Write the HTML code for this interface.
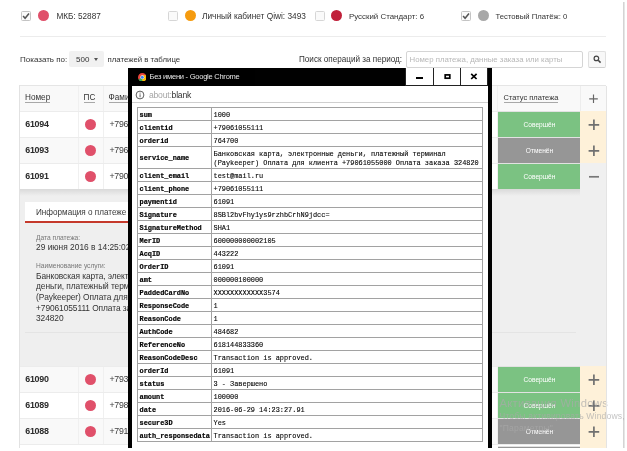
<!DOCTYPE html>
<html><head><meta charset="utf-8">
<style>
*{box-sizing:border-box;margin:0;padding:0}
html,body{width:627px;height:451px;overflow:hidden;background:#fff}
body{font-family:"Liberation Sans",sans-serif;color:#333;position:relative;font-size:9px}
#root{position:absolute;left:0;top:0;width:627px;height:451px;overflow:hidden;will-change:transform;opacity:0.999;background:#fff}
.abs{position:absolute}
.cb{position:absolute;width:10px;height:10px;border:1px solid #c4c4c4;background:#fafafa;border-radius:1.5px;top:10.5px}
.cb svg{position:absolute;left:-1px;top:-1px}
.dot{position:absolute;width:11.2px;height:11.2px;border-radius:50%;top:9.9px}
.lbl{position:absolute;top:10.5px;font-size:8.2px;color:#333;white-space:nowrap;line-height:11px}
.hr{position:absolute;left:20px;top:36px;width:586px;height:1px;background:#ececec}
.t{position:absolute;white-space:nowrap}
.f8{font-size:8px;line-height:11px;color:#333}
/* table */
#tbl{position:absolute;left:19px;top:85px;width:587px;height:366px;background:#efefef;border-left:1px solid #e2e2e2}
.row{position:absolute;left:0;width:586px;height:26px;background:#fff;border-top:1px solid #ececec}
.row.alt{background:#f9f9f9}
.c{position:absolute;top:0;height:100%;border-left:1px solid #f0f0f0}
.num{position:absolute;left:5.3px;top:7.3px;letter-spacing:-0.28px;font-size:8.9px;font-weight:bold;color:#2a2a2a;line-height:10px}
.ps{position:absolute;left:64.5px;top:6.5px;width:11px;height:11px;border-radius:50%;background:#e0506a}
.ph{position:absolute;left:89.5px;top:7.2px;font-size:8.8px;letter-spacing:-0.32px;color:#404040;line-height:10px}
.st{position:absolute;left:477.7px;top:0;width:83.6px;box-shadow:0 -1px 0 #e2e2e2;height:25px;color:#fff;font-size:6.6px;text-align:center;line-height:25px}
.g{background:#7bc282}
.gr{background:#969696}
.pl{position:absolute;left:560px;top:-1px;width:26px;height:27px;background:#fef1d9}
.pl i,.pl b{position:absolute;background:#6a6a6a}
.pl i{left:7.5px;top:12.3px;width:11px;height:1.8px}
.pl b{left:12.1px;top:7.7px;width:1.8px;height:11px}
.hd{font-size:8.2px;line-height:8px;color:#333;border-bottom:1px solid #a8a8a8;top:8px}
/* popup */
#pop{position:absolute;left:128px;top:68px;width:364px;height:400px;background:#fff;border-left:4px solid #000;border-right:4px solid #000}
#tb{position:absolute;left:0;top:0;width:356px;height:18px;background:#000}
#tb .ttl{position:absolute;left:17.6px;top:4px;letter-spacing:-0.24px;font-size:7.5px;color:#e6e6e6;line-height:10px;white-space:nowrap}
.wb{position:absolute;top:0;height:18px;background:#fff;border:1px solid #222;border-top:0}
#ab{position:absolute;left:0;top:18px;width:356px;height:17px;border-bottom:1px solid #cfcfcf;background:#fff}
#kv{position:absolute;left:5px;top:39px;border-collapse:collapse;font-family:"Liberation Mono",monospace;font-size:6.92px;color:#000}
#kv td{border:1px solid #a2a2a2;height:13px;padding:2px 0 0 1.5px;white-space:nowrap;line-height:9px;vertical-align:middle}
#kv td.k{font-weight:bold;-webkit-text-stroke:0.2px #111;width:74px;min-width:74px;max-width:74px}
#kv td.v{width:271px;min-width:271px;padding-left:1.5px;-webkit-text-stroke:0.1px #000}
.wm{position:absolute;white-space:nowrap;color:rgba(170,170,170,0.7)}
</style></head><body><div id="root">

<!-- top filter row -->
<div class="cb on" style="left:21px"><svg width="10" height="10" viewBox="0 0 10 10"><path d="M2.1 5L4.1 7.3L8 2.5" fill="none" stroke="#555" stroke-width="1.5"/></svg></div><div class="dot" style="left:38.2px;background:#e0506a"></div><div class="lbl" style="left:56.5px">МКБ: 52887</div>
<div class="cb" style="left:167.6px;border-color:#d6d6d6"></div><div class="dot" style="left:184.8px;background:#f59b0f"></div><div class="lbl" style="left:202px;font-size:8.3px">Личный кабинет Qiwi: 3493</div>
<div class="cb" style="left:314.8px;border-color:#d6d6d6"></div><div class="dot" style="left:331.2px;background:#c0203a"></div><div class="lbl" style="left:349px;font-size:7.9px">Русский Стандарт: 6</div>
<div class="cb on" style="left:461px"><svg width="10" height="10" viewBox="0 0 10 10"><path d="M2.1 5L4.1 7.3L8 2.5" fill="none" stroke="#555" stroke-width="1.5"/></svg></div><div class="dot" style="left:478.2px;background:#a8a8a8"></div><div class="lbl" style="left:495.5px;font-size:7.7px">Тестовый Платёж: 0</div>
<div class="hr"></div>
<div class="abs" style="left:606px;top:86px;width:1px;height:362px;background:#e4e4e4;z-index:1"></div>
<div class="abs" style="left:623px;top:2px;width:1px;height:449px;background:#d4d4d4"></div><div class="abs" style="left:624px;top:2px;width:1px;height:449px;background:#e6e6e6"></div>

<!-- controls -->
<div class="t f8" style="left:20px;top:53.5px">Показать по:</div>
<div class="abs" style="left:69px;top:51px;width:35px;height:16px;background:#f1f1f1;border-radius:2px"></div>
<div class="t f8" style="left:76px;top:53.5px">500</div>
<div class="abs" style="left:94px;top:58px;width:0;height:0;border:2.6px solid transparent;border-top:3px solid #555"></div>
<div class="t f8" style="left:107.5px;top:53.5px;font-size:7.8px">платежей в таблице</div>
<div class="t f8" style="left:299px;top:53.5px;font-size:8.15px">Поиск операций за период:</div>
<div class="abs" style="left:406px;top:51px;width:177px;height:17px;border:1px solid #d5d5d5;border-radius:2px;background:#fff"></div>
<div class="t f8" style="left:409.5px;top:54px;color:#b8b8b8;font-size:7.8px">Номер платежа, данные заказа или карты</div>
<div class="abs" style="left:588px;top:51px;width:18px;height:17px;border:1px solid #e0e0e0;border-bottom-color:#cfcfcf;border-radius:2px;background:#f8f8f8"></div>
<svg class="abs" style="left:593px;top:55px" width="9" height="9" viewBox="0 0 9 9"><circle cx="3.4" cy="3.4" r="2.3" fill="none" stroke="#444" stroke-width="1.2"/><path d="M5.2 5.2 L7.6 7.6" stroke="#444" stroke-width="1.5"/></svg>

<!-- main table -->
<div id="tbl">
  <div class="row alt" style="top:0;height:27px;border-top:1px solid #e5e5e5">
    <div class="c" style="left:58px;width:25px"></div><div class="c" style="left:83px;width:395px"></div><div class="c" style="left:477px;width:84px"></div>
    <div class="t hd" style="left:5px">Номер</div>
    <div class="t hd" style="left:63.5px">ПС</div>
    <div class="t hd" style="left:88.5px">Фамилия</div>
    <div class="t hd" style="left:483.5px;font-size:7.5px">Статус платежа</div>
    <div class="pl" style="background:#f9f9f9;border-left:1px solid #ededed;top:0"><svg class="abs" style="left:0;top:0" width="26" height="27" viewBox="0 0 26 27"><path d="M8.2 12.8H16.8M12.5 8.5V17.1" stroke="#666" stroke-width="1.15" fill="none"/></svg></div>
  </div>
  <div class="row" style="top:26px"><div class="c" style="left:58px;width:25px"></div><div class="c" style="left:83px;width:395px"></div><div class="c" style="left:477px;width:84px"></div><div class="num">61094</div><div class="ps"></div><div class="ph">+7961</div><div class="st g">Совершён</div><div class="pl"><svg class="abs" style="left:0;top:0" width="26" height="27" viewBox="0 0 26 27"><path d="M8.6 13.8H19.2M13.9 8.5V19.1" stroke="#707070" stroke-width="1.7" fill="none"/></svg></div></div>
  <div class="row alt" style="top:52px"><div class="c" style="left:58px;width:25px"></div><div class="c" style="left:83px;width:395px"></div><div class="c" style="left:477px;width:84px"></div><div class="num">61093</div><div class="ps"></div><div class="ph">+7961</div><div class="st gr">Отменён</div><div class="pl"><svg class="abs" style="left:0;top:0" width="26" height="27" viewBox="0 0 26 27"><path d="M8.6 13.8H19.2M13.9 8.5V19.1" stroke="#707070" stroke-width="1.7" fill="none"/></svg></div></div>
  <div class="row" style="top:78px"><div class="c" style="left:58px;width:25px"></div><div class="c" style="left:83px;width:395px"></div><div class="c" style="left:477px;width:84px"></div><div class="num">61091</div><div class="ps"></div><div class="ph">+7901</div><div class="st g">Совершён</div><div class="pl" style="background:#f0f0f0"><svg class="abs" style="left:0;top:0" width="26" height="27" viewBox="0 0 26 27"><path d="M9 13.8H19" stroke="#777" stroke-width="1.7" fill="none"/></svg></div></div>

  <!-- expanded info -->
  <div class="abs" style="left:0;top:104px;width:560px;height:7px;background:linear-gradient(rgba(0,0,0,0.09),rgba(0,0,0,0))"></div>
  <div class="abs" style="left:5px;top:116.5px;width:300px;height:19px;background:#fff"></div>
  <div class="abs" style="left:5px;top:135.5px;width:300px;height:2px;background:#c5392b"></div>
  <div class="abs" style="left:5px;top:247px;width:551px;height:1px;background:#e4e4e4"></div>
  <div class="t" style="left:16px;top:122px;font-size:8.15px;line-height:11px;color:#3a3a3a">Информация о платеже №</div>
  <div class="t" style="left:16px;top:148.8px;font-size:6.65px;line-height:8px;color:#777">Дата платежа:</div>
  <div class="t" style="left:16px;top:157px;font-size:8.4px;line-height:10px;color:#333">29 июня 2016 в 14:25:02</div>
  <div class="t" style="left:16px;top:176.5px;font-size:6.65px;line-height:8px;color:#777">Наименование услуги:</div>
  <div class="t" style="left:16px;top:185.6px;font-size:8.4px;line-height:10.7px;letter-spacing:-0.08px;color:#333">Банковская карта, электронные<br>деньги, платежный терминал<br>(Paykeeper) Оплата для клиента<br>+79061055111 Оплата заказа<br>324820</div>

  <div class="row alt" style="top:281px"><div class="c" style="left:58px;width:25px"></div><div class="c" style="left:83px;width:395px"></div><div class="c" style="left:477px;width:84px"></div><div class="num">61090</div><div class="ps"></div><div class="ph">+7931</div><div class="st g">Совершён</div><div class="pl"><svg class="abs" style="left:0;top:0" width="26" height="27" viewBox="0 0 26 27"><path d="M8.6 13.8H19.2M13.9 8.5V19.1" stroke="#707070" stroke-width="1.7" fill="none"/></svg></div></div>
  <div class="row" style="top:307px"><div class="c" style="left:58px;width:25px"></div><div class="c" style="left:83px;width:395px"></div><div class="c" style="left:477px;width:84px"></div><div class="num">61089</div><div class="ps"></div><div class="ph">+7981</div><div class="st g">Совершён</div><div class="pl"><svg class="abs" style="left:0;top:0" width="26" height="27" viewBox="0 0 26 27"><path d="M8.6 13.8H19.2M13.9 8.5V19.1" stroke="#707070" stroke-width="1.7" fill="none"/></svg></div></div>
  <div class="row alt" style="top:333px"><div class="c" style="left:58px;width:25px"></div><div class="c" style="left:83px;width:395px"></div><div class="c" style="left:477px;width:84px"></div><div class="num">61088</div><div class="ps"></div><div class="ph">+7911</div><div class="st gr">Отменён</div><div class="pl"><svg class="abs" style="left:0;top:0" width="26" height="27" viewBox="0 0 26 27"><path d="M8.6 13.8H19.2M13.9 8.5V19.1" stroke="#707070" stroke-width="1.7" fill="none"/></svg></div></div>
  <div class="row" style="top:359px"><div class="st gr" style="top:1.5px"></div><div class="pl"></div></div>
</div>

<!-- popup window -->
<div id="pop">
  <div id="tb">
    <svg class="abs" style="left:5.5px;top:4.6px" width="8.6" height="8.6" viewBox="0 0 10 10"><circle cx="5" cy="5" r="5" fill="#e8453c"/><path d="M5 5 L0.7 7.5 A5 5 0 0 0 5 10 L7.5 6.4Z" fill="#34a853"/><path d="M5 5 L5 10 A5 5 0 0 0 9.3 2.5 L5 2.5Z" fill="#fbbc05"/><circle cx="5" cy="5" r="2.3" fill="#fff"/><circle cx="5" cy="5" r="1.8" fill="#4285f4"/></svg>
    <div class="ttl">Без имени - Google Chrome</div>
    <div class="wb" style="left:273px;width:29px"><div class="abs" style="left:10px;top:9px;width:7px;height:2px;background:#000"></div></div>
    <div class="wb" style="left:301px;width:28px"><svg class="abs" style="left:8px;top:4px" width="12" height="10" viewBox="0 0 12 10"><rect x="3.2" y="2.9" width="4.6" height="3.3" fill="none" stroke="#000" stroke-width="1.7"/></svg></div>
    <div class="wb" style="left:328px;width:28px"><svg class="abs" style="left:9px;top:5px" width="8" height="7" viewBox="0 0 8 7"><path d="M1.2 0.8L6.6 6M6.6 0.8L1.2 6" stroke="#000" stroke-width="1.7" fill="none"/></svg></div>
  </div>
  <div id="ab">
    <svg class="abs" style="left:3.2px;top:3.5px" width="10" height="10" viewBox="0 0 10 10"><circle cx="5" cy="5" r="3.9" fill="none" stroke="#555" stroke-width="0.95"/><rect x="4.6" y="4.3" width="0.9" height="3" fill="#555"/><rect x="4.6" y="2.6" width="0.9" height="1" fill="#555"/></svg>
    <div class="t" style="left:17px;top:3.8px;font-size:8.6px;letter-spacing:-0.22px;line-height:10px;color:#a6a6a6">about:<span style="color:#333">blank</span></div>
  </div>
  <table id="kv">
    <tr><td class="k">sum</td><td class="v">1000</td></tr>
    <tr><td class="k">clientid</td><td class="v">+79061055111</td></tr>
    <tr><td class="k">orderid</td><td class="v">764700</td></tr>
    <tr><td class="k" style="height:22px">service_name</td><td class="v">Банковская карта, электронные деньги, платежный терминал<br>(Paykeeper) Оплата для клиента +79061055000 Оплата заказа 324820</td></tr>
    <tr><td class="k">client_email</td><td class="v">test@mail.ru</td></tr>
    <tr><td class="k">client_phone</td><td class="v">+79061055111</td></tr>
    <tr><td class="k">paymentid</td><td class="v">61091</td></tr>
    <tr><td class="k">Signature</td><td class="v">8SBl2bvFhy1ys9rzhbCrhN9jdcc=</td></tr>
    <tr><td class="k">SignatureMethod</td><td class="v">SHA1</td></tr>
    <tr><td class="k">MerID</td><td class="v">600000000002105</td></tr>
    <tr><td class="k">AcqID</td><td class="v">443222</td></tr>
    <tr><td class="k">OrderID</td><td class="v">61091</td></tr>
    <tr><td class="k">amt</td><td class="v">000000100000</td></tr>
    <tr><td class="k">PaddedCardNo</td><td class="v">XXXXXXXXXXXX3574</td></tr>
    <tr><td class="k">ResponseCode</td><td class="v">1</td></tr>
    <tr><td class="k">ReasonCode</td><td class="v">1</td></tr>
    <tr><td class="k">AuthCode</td><td class="v">484682</td></tr>
    <tr><td class="k">ReferenceNo</td><td class="v">618144833360</td></tr>
    <tr><td class="k">ReasonCodeDesc</td><td class="v">Transaction is approved.</td></tr>
    <tr><td class="k">orderId</td><td class="v">61091</td></tr>
    <tr><td class="k">status</td><td class="v">3 - Завершено</td></tr>
    <tr><td class="k">amount</td><td class="v">100000</td></tr>
    <tr><td class="k">date</td><td class="v">2016-06-29 14:23:27.91</td></tr>
    <tr><td class="k">secure3D</td><td class="v">Yes</td></tr>
    <tr><td class="k">auth_responsedata</td><td class="v">Transaction is approved.</td></tr>
  </table>
</div>

<div class="abs" style="left:0;top:448px;width:627px;height:3px;background:#fff"></div>
<!-- windows activation watermark -->
<div class="wm" style="left:499.5px;top:396.5px;font-size:11.2px;line-height:13px;letter-spacing:0.32px">Активация Windows</div>
<div class="wm" style="left:499.5px;top:411.3px;font-size:8.6px;line-height:10px;letter-spacing:0.15px">Чтобы активировать Windows, перейдите</div>
<div class="wm" style="left:499.5px;top:423.3px;font-size:8.6px;line-height:10px;letter-spacing:0.15px">"Параметры".</div>
</div></body></html>
